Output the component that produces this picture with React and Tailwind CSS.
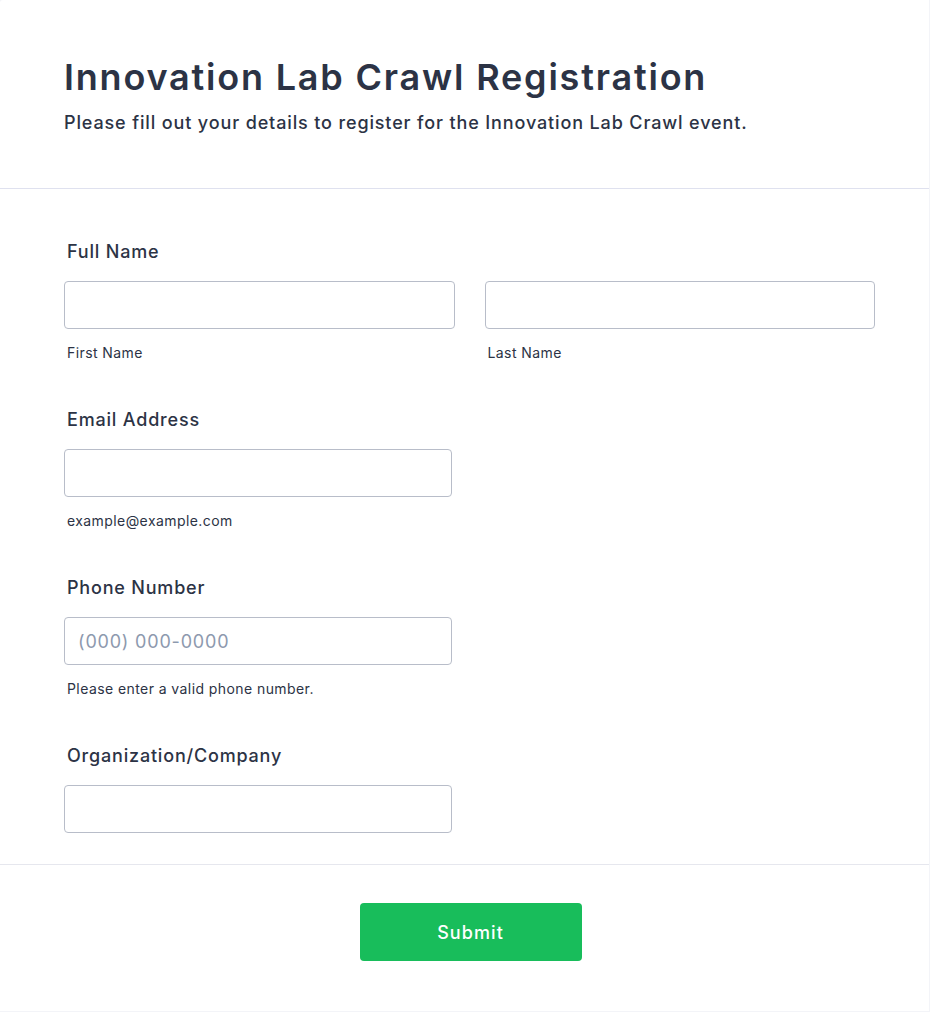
import React from "react";

const Field = ({ label, children, hint }) => (
  <div className="flex flex-col">
    <label className="pl-[3px] text-[18px] leading-[28px] font-medium tracking-[0.045em] text-[#2c3345]">
      {label}
    </label>
    <div className="mt-[15px]">{children}</div>
    {hint && (
      <p className="mt-[14px] pl-[3px] text-[14px] leading-[20px] tracking-[0.03em] text-[#2c3345]">
        {hint}
      </p>
    )}
  </div>
);

const Input = ({ className = "", placeholder }) => (
  <input
    type="text"
    placeholder={placeholder}
    className={`h-[48px] rounded-[4px] border border-[#b8bdc9] bg-white px-[13px] text-[18px] tracking-[0.045em] text-[#2c3345] outline-none placeholder:text-[#8d99ae] ${className}`}
  />
);

const App = () => {
  return (
    <div
      className="min-h-screen bg-[#f3f4f8]"
      style={{ fontFamily: "Inter, 'Noto Sans', sans-serif" }}
    >
      <div className="w-[929px] rounded-tl-[3px] bg-white">
        {/* header */}
        <div className="border-b border-[#dfe1ef] px-16 pt-[56px] pb-[51px]">
          <h1 className="text-[36px] leading-[43px] font-semibold tracking-[0.05em] text-[#2c3345]">
            Innovation Lab Crawl Registration
          </h1>
          <p className="mt-[10px] text-[18px] leading-[28px] font-medium tracking-[0.048em] text-[#2c3345]">
            Please fill out your details to register for the Innovation Lab
            Crawl event.
          </p>
        </div>

        {/* fields */}
        <div className="flex flex-col gap-[43px] pl-16 pt-[49px] pb-[31px]">
          <div className="flex flex-col">
            <label className="pl-[3px] text-[18px] leading-[28px] font-medium tracking-[0.045em] text-[#2c3345]">
              Full Name
            </label>
            <div className="mt-[15px] grid w-[811px] grid-cols-2 gap-[30px]">
              <div className="flex flex-col">
                <Input className="w-full" />
                <p className="mt-[14px] pl-[3px] text-[14px] leading-[20px] tracking-[0.03em] text-[#2c3345]">
                  First Name
                </p>
              </div>
              <div className="flex flex-col">
                <Input className="w-full" />
                <p className="mt-[14px] pl-[3px] text-[14px] leading-[20px] tracking-[0.03em] text-[#2c3345]">
                  Last Name
                </p>
              </div>
            </div>
          </div>

          <Field label="Email Address" hint="example@example.com">
            <Input className="w-[388px]" />
          </Field>

          <Field label="Phone Number" hint="Please enter a valid phone number.">
            <Input className="w-[388px]" placeholder="(000) 000-0000" />
          </Field>

          <Field label="Organization/Company">
            <Input className="w-[388px]" />
          </Field>
        </div>

        {/* footer */}
        <div className="flex justify-center border-t border-[#e6e7ee] pl-16 pr-[52px] pt-[38px] pb-[50px]">
          <button className="h-[58px] w-[222px] rounded-[4px] bg-[#18bd5b] text-[18px] font-medium tracking-[0.06em] text-white">
            Submit
          </button>
        </div>
      </div>
    </div>
  );
};

export default App;
